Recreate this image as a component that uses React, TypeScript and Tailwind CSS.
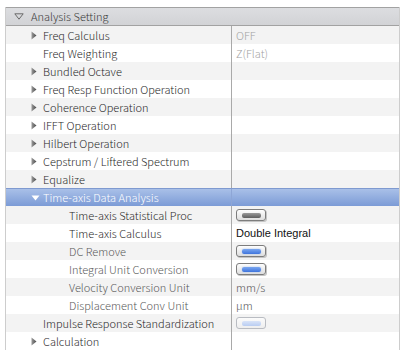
import React from 'react'

type Row = {
  label: string
  level: 1 | 2
  arrow?: 'right' | 'down'
  value?: React.ReactNode
  dim?: boolean
}

function RightArrow() {
  return (
    <svg width="6" height="9" viewBox="0 0 6 9" className="shrink-0">
      <defs>
        <linearGradient id="ra" x1="0" y1="0" x2="1" y2="0">
          <stop offset="0" stopColor="#9a9a9a" />
          <stop offset="1" stopColor="#4a4a4a" />
        </linearGradient>
      </defs>
      <polygon points="0.5,0.5 5.5,4.5 0.5,8.5" fill="url(#ra)" />
    </svg>
  )
}

function DownArrow() {
  return (
    <svg width="9" height="6" viewBox="0 0 9 6" className="shrink-0">
      <polygon points="0.5,0.5 8.5,0.5 4.5,5.5" fill="#ffffff" />
    </svg>
  )
}

function Toggle({ state }: { state: 'off' | 'on' | 'disabled' }) {
  const frame =
    state === 'disabled'
      ? 'border-[#b9bcc2] bg-gradient-to-b from-[#fbfbfb] to-[#eeeeee]'
      : 'border-[#7d7d7d] bg-gradient-to-b from-[#fefefe] to-[#dedede] shadow-[1px_1px_0_#c4c4c4]'
  const bar =
    state === 'off'
      ? 'bg-gradient-to-b from-[#9a9a9a] to-[#5e5e5e]'
      : state === 'on'
        ? 'bg-gradient-to-b from-[#7aa6f0] to-[#3f74dc] shadow-[0_0_2px_#a9c4f2]'
        : 'bg-gradient-to-b from-[#d9e4f8] to-[#b9cdf2]'
  return (
    <div className={`flex h-[12px] w-[30px] items-center justify-center rounded-[3px] border ${frame}`}>
      <div className={`h-[5px] w-[19px] rounded-[2px] ${bar}`} />
    </div>
  )
}

const rows: Row[] = [
  { label: 'Freq Calculus', level: 1, arrow: 'right', value: <span className="text-[#a3a3a3]">OFF</span> },
  { label: 'Freq Weighting', level: 1, value: <span className="text-[#a3a3a3]">Z(Flat)</span> },
  { label: 'Bundled Octave', level: 1, arrow: 'right' },
  { label: 'Freq Resp Function Operation', level: 1, arrow: 'right' },
  { label: 'Coherence Operation', level: 1, arrow: 'right' },
  { label: 'IFFT Operation', level: 1, arrow: 'right' },
  { label: 'Hilbert Operation', level: 1, arrow: 'right' },
  { label: 'Cepstrum / Liftered Spectrum', level: 1, arrow: 'right' },
  { label: 'Equalize', level: 1, arrow: 'right' },
  { label: 'Time-axis Data Analysis', level: 1, arrow: 'down' },
  { label: 'Time-axis Statistical Proc', level: 2, value: <Toggle state="off" /> },
  {
    label: 'Time-axis Calculus',
    level: 2,
    value: <span className="text-[#111] [font-family:'Liberation_Sans',sans-serif]">Double Integral</span>,
  },
  { label: 'DC Remove', level: 2, dim: true, value: <Toggle state="on" /> },
  { label: 'Integral Unit Conversion', level: 2, dim: true, value: <Toggle state="on" /> },
  { label: 'Velocity Conversion Unit', level: 2, dim: true, value: <span className="text-[#555]">mm/s</span> },
  { label: 'Displacement Conv Unit', level: 2, dim: true, value: <span className="text-[#555]">μm</span> },
  { label: 'Impulse Response Standardization', level: 1, value: <Toggle state="disabled" /> },
  { label: 'Calculation', level: 1, arrow: 'right' },
]

export default function App() {
  return (
    <div className="min-h-[362px] w-[412px] bg-white pl-[5px] pt-[7px] text-[11px] font-light [font-family:'Noto_Sans_CJK_JP',sans-serif]">
      <div className="w-[395px] border-x border-[#cdcdcd]">
        <div className="flex h-[19px] items-center gap-[7px] border-y border-y-[#a2a2a2] bg-gradient-to-b from-[#dcdde0] to-[#d2d3d6] pl-[8px] text-[#3a3a3a]">
          <svg width="10" height="7" viewBox="0 0 10 7">
            <polygon points="0.8,0.8 9.2,0.8 5,6.2" fill="none" stroke="#6a6a6a" strokeWidth="1" />
          </svg>
          <span>Analysis Setting</span>
        </div>

        {rows.map((row, i) => {
          const selected = row.arrow === 'down'
          const bg = selected
            ? 'bg-gradient-to-b from-[#a9c0e8] to-[#7c9bd6] border-t border-t-[#7f9ad0]'
            : i % 2 === 0
              ? 'bg-[#f3f3f3]'
              : 'bg-white'
          const textColor = selected ? 'text-white' : row.dim ? 'text-[#5a5a5a]' : 'text-[#2a2a2a]'
          return (
            <div key={row.label} className={`flex h-[18px] ${bg}`}>
              <div
                className={`flex w-[225px] shrink-0 items-center whitespace-nowrap ${textColor} ${
                  row.level === 2 ? 'pl-[51px]' : 'pl-[25px]'
                }`}
              >
                <span className="flex w-[12px] items-center">
                  {row.arrow === 'right' && <RightArrow />}
                  {row.arrow === 'down' && <DownArrow />}
                </span>
                <span>{row.label}</span>
              </div>
              <div
                className={`flex flex-1 items-center border-l pl-[4px] ${
                  selected ? 'border-l-[#8ea6d6]' : 'border-l-[#a9a9a9]'
                }`}
              >
                {row.value}
              </div>
            </div>
          )
        })}
      </div>
    </div>
  )
}
